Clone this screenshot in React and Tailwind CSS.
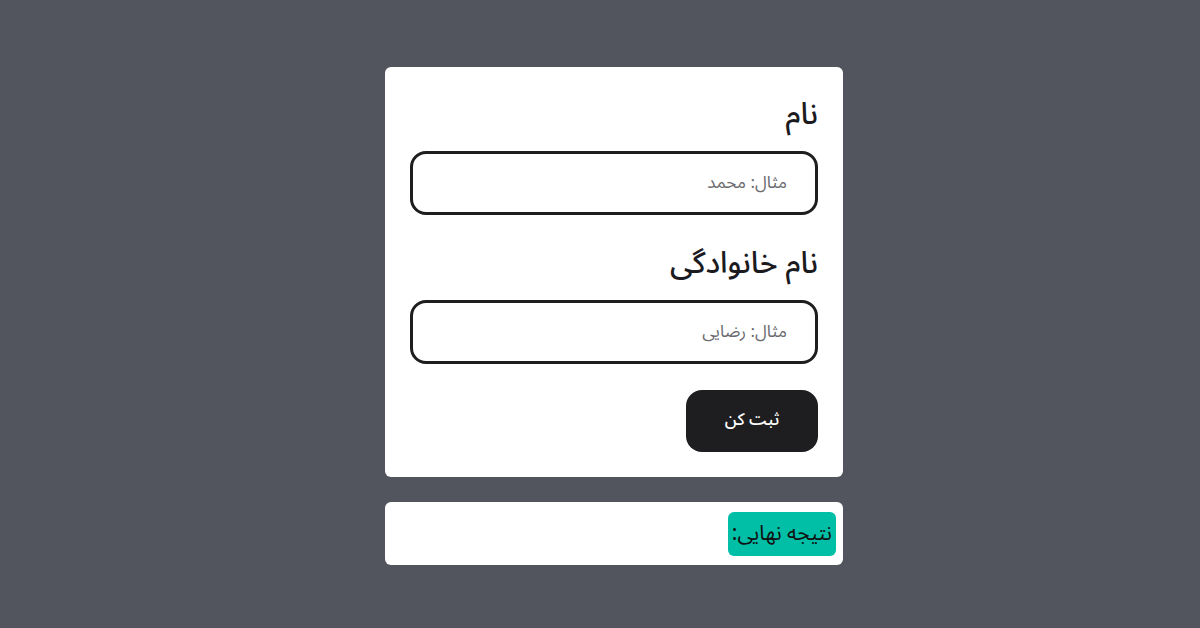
const Field = ({ label, placeholder }) => {
    return (
        <div className="flex flex-col">
            <h2 className="text-3xl leading-[45px] font-medium text-[#1b1b1f] mb-[14px]">{label}</h2>
            <input
                type="text"
                placeholder={placeholder}
                className="h-16 w-full rounded-2xl border-[3px] border-[#1e1e21] bg-white px-7 text-[17px] text-[#1b1b1f] placeholder:text-[#6b6b70] outline-none"
            />
        </div>
    );
};

export default function App() {
    return (
        <div
            dir="rtl"
            className="min-h-[628px] w-full bg-[#52555e] flex flex-col items-center pt-[67px] pl-[28px]"
            style={{ fontFamily: '"Noto Sans Arabic", "Noto Sans", "DejaVu Sans", sans-serif' }}
        >
            {/* ======= form card ====== */}
            <form className="w-[458px] bg-white rounded-md px-[25px] pt-[25px] pb-[25px] flex flex-col">
                <Field label="نام" placeholder="مثال: محمد" />
                <div className="mt-[26px]">
                    <Field label="نام خانوادگی" placeholder="مثال: رضایی" />
                </div>
                <div className="mt-[26px] flex">
                    <button
                        type="button"
                        className="w-[132px] h-[62px] rounded-2xl bg-[#1e1e21] text-white text-[17px] font-medium"
                    >
                        ثبت کن
                    </button>
                </div>
            </form>

            {/* ======= result card ====== */}
            <div className="w-[458px] mt-[25px] bg-white rounded-md h-[63px] flex items-center px-[7px]">
                <span className="bg-[#00bfa6] rounded-md h-[44px] flex items-center px-1 text-[21px] text-[#111]">
                    نتیجه نهایی:
                </span>
            </div>
        </div>
    );
}
